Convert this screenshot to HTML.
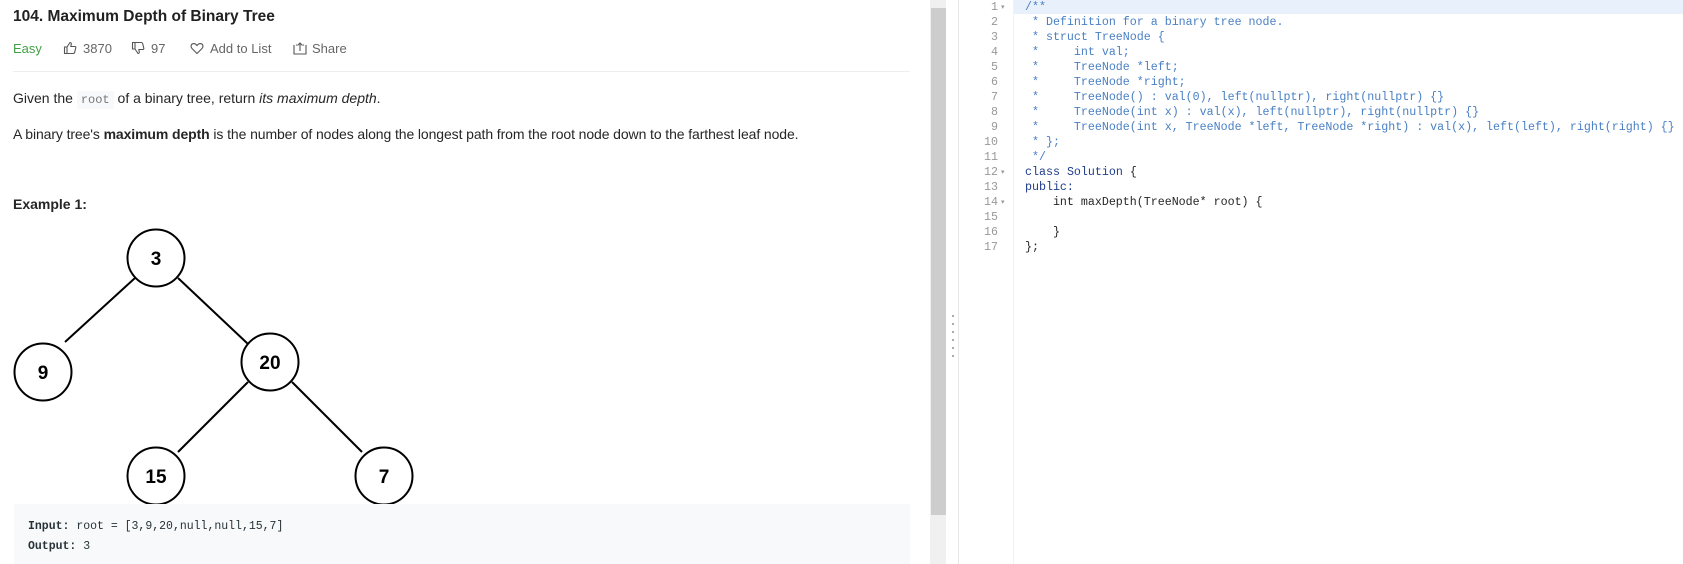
<!DOCTYPE html>
<html><head><meta charset="utf-8"><style>
*{margin:0;padding:0;box-sizing:border-box}
body{width:1683px;height:564px;overflow:hidden;background:#fff;font-family:"Liberation Sans",sans-serif;color:#262626;position:relative}
.a{position:absolute;white-space:nowrap}
.code{font-family:"Liberation Mono",monospace;font-size:11.65px;line-height:15px}
.ln{position:absolute;left:960px;width:38px;text-align:right;color:#999;font-family:"Liberation Mono",monospace;font-size:11.65px}
.c{color:#4a80c4}
.k{color:#1f3d8a}
</style></head><body>
<div class="a" style="left:13px;top:8px;font-size:15.5px;font-weight:bold;color:#212121">104. Maximum Depth of Binary Tree</div>
<div class="a" style="left:13px;top:41px;font-size:13px;color:#43a047">Easy</div>
<svg class="a" style="left:63px;top:41px" width="14" height="14" viewBox="0 0 14 14" fill="none" stroke="#555" stroke-width="1.1"><path d="M1.5 6h2.5v6.5h-2.5z M4 6l3-4.5c1 0 1.5.8 1.300 1.8L7.8 5.5h4c.8 0 1.2.6 1 1.3l-1.2 4.8c-.2.6-.6.9-1.2.9H4"/></svg>
<div class="a" style="left:83px;top:41px;font-size:13px;color:#666">3870</div>
<svg class="a" style="left:131px;top:41px" width="14" height="14" viewBox="0 0 14 14" fill="none" stroke="#555" stroke-width="1.1"><path d="M1.5 8h2.5V1.5h-2.5z M4 8l3 4.5c1 0 1.5-.8 1.3-1.8L7.8 8.5h4c.8 0 1.2-.6 1-1.3L11.6 2.4c-.2-.6-.6-.9-1.2-.9H4"/></svg>
<div class="a" style="left:151px;top:41px;font-size:13px;color:#666">97</div>
<svg class="a" style="left:190px;top:42px" width="14" height="13" viewBox="0 0 14 13" fill="none" stroke="#555" stroke-width="1.1"><path d="M7 11.5L2 6.5C.5 5 .8 2.5 2.6 1.8 4.2 1.2 5.8 2 7 3.5 8.2 2 9.8 1.2 11.4 1.8 13.2 2.5 13.5 5 12 6.5z"/></svg>
<div class="a" style="left:210px;top:41px;font-size:13px;color:#666">Add to List</div>
<svg class="a" style="left:293px;top:42px" width="14" height="13" viewBox="0 0 14 13" fill="none" stroke="#555" stroke-width="1.1"><path d="M1 3v9h12V3 M4 3h-1 M10 3h1 M7 9V1 M4.5 3.5L7 1l2.5 2.5"/></svg>
<div class="a" style="left:312px;top:41px;font-size:13px;color:#666">Share</div>
<div class="a" style="left:13px;top:71px;width:897px;height:1px;background:#eee"></div>
<div class="a" style="left:13px;top:90px;font-size:14px">Given the <span style="font-family:'Liberation Mono',monospace;font-size:12px;color:#777;background:#f7f9fa;padding:2px 4px">root</span> of a binary tree, return <i>its maximum depth</i>.</div>
<div class="a" style="left:13px;top:126px;font-size:14px;letter-spacing:-0.1px">A binary tree's <b>maximum depth</b> is the number of nodes along the longest path from the root node down to the farthest leaf node.</div>
<div class="a" style="left:13px;top:196px;font-size:14px;font-weight:bold">Example 1:</div>
<svg class="a" style="left:0;top:220px" width="450" height="290">
<g stroke="#000" stroke-width="2" fill="none">
<line x1="135" y1="58" x2="65" y2="122"/><line x1="178" y1="58" x2="248" y2="124"/>
<line x1="248" y1="162" x2="178" y2="232"/><line x1="292" y1="162" x2="362" y2="232"/>
<circle cx="156" cy="38" r="28.5" fill="#fff"/><circle cx="43" cy="152" r="28.5" fill="#fff"/>
<circle cx="270" cy="142" r="28.5" fill="#fff"/><circle cx="156" cy="256" r="28.5" fill="#fff"/>
<circle cx="384" cy="256" r="28.5" fill="#fff"/></g>
<g font-family="Liberation Sans" font-weight="bold" font-size="19" text-anchor="middle">
<text x="156" y="45">3</text><text x="43" y="159">9</text><text x="270" y="149">20</text><text x="156" y="263">15</text><text x="384" y="263">7</text></g>
</svg>
<div class="a" style="left:14px;top:504px;width:896px;height:60px;background:#f7f9fa"></div>
<div class="a code" style="left:28px;top:519px;font-size:11.5px;color:#263238"><b>Input:</b> root = [3,9,20,null,null,15,7]</div>
<div class="a code" style="left:28px;top:539px;font-size:11.5px;color:#263238"><b>Output:</b> 3</div>
<div class="a" style="left:930px;top:0;width:16px;height:564px;background:#f0f0f0"></div>
<div class="a" style="left:931px;top:8px;width:15px;height:507px;background:#cdcdcd"></div>
<div class="a" style="left:958px;top:0;width:1px;height:564px;background:#e6e6e6"></div>
<div class="a" style="left:952px;top:315px;width:2px;height:44px;background:repeating-linear-gradient(#aaa 0 2px,transparent 2px 8px)"></div>
<div class="a" style="left:1014px;top:0;width:669px;height:14px;background:#e8f0fc"></div>
<div class="a" style="left:1013px;top:0;width:1px;height:564px;background:#f2f2f2"></div>
<div class="ln" style="top:0;line-height:15px">1<br>2<br>3<br>4<br>5<br>6<br>7<br>8<br>9<br>10<br>11<br>12<br>13<br>14<br>15<br>16<br>17</div>
<div class="a" style="left:1001px;top:0;font-size:7px;line-height:15px;color:#999">▾<br><br><br><br><br><br><br><br><br><br><br>▾<br><br>▾</div>
<pre class="a code" style="left:1025px;top:0;white-space:pre"><span class="c">/**
 * Definition for a binary tree node.
 * struct TreeNode {
 *     int val;
 *     TreeNode *left;
 *     TreeNode *right;
 *     TreeNode() : val(0), left(nullptr), right(nullptr) {}
 *     TreeNode(int x) : val(x), left(nullptr), right(nullptr) {}
 *     TreeNode(int x, TreeNode *left, TreeNode *right) : val(x), left(left), right(right) {}
 * };
 */</span>
<span class="k">class</span> <span class="k">Solution</span> {
<span class="k">public:</span>
    int maxDepth(TreeNode* root) {

    }
};</pre>
</body></html>
